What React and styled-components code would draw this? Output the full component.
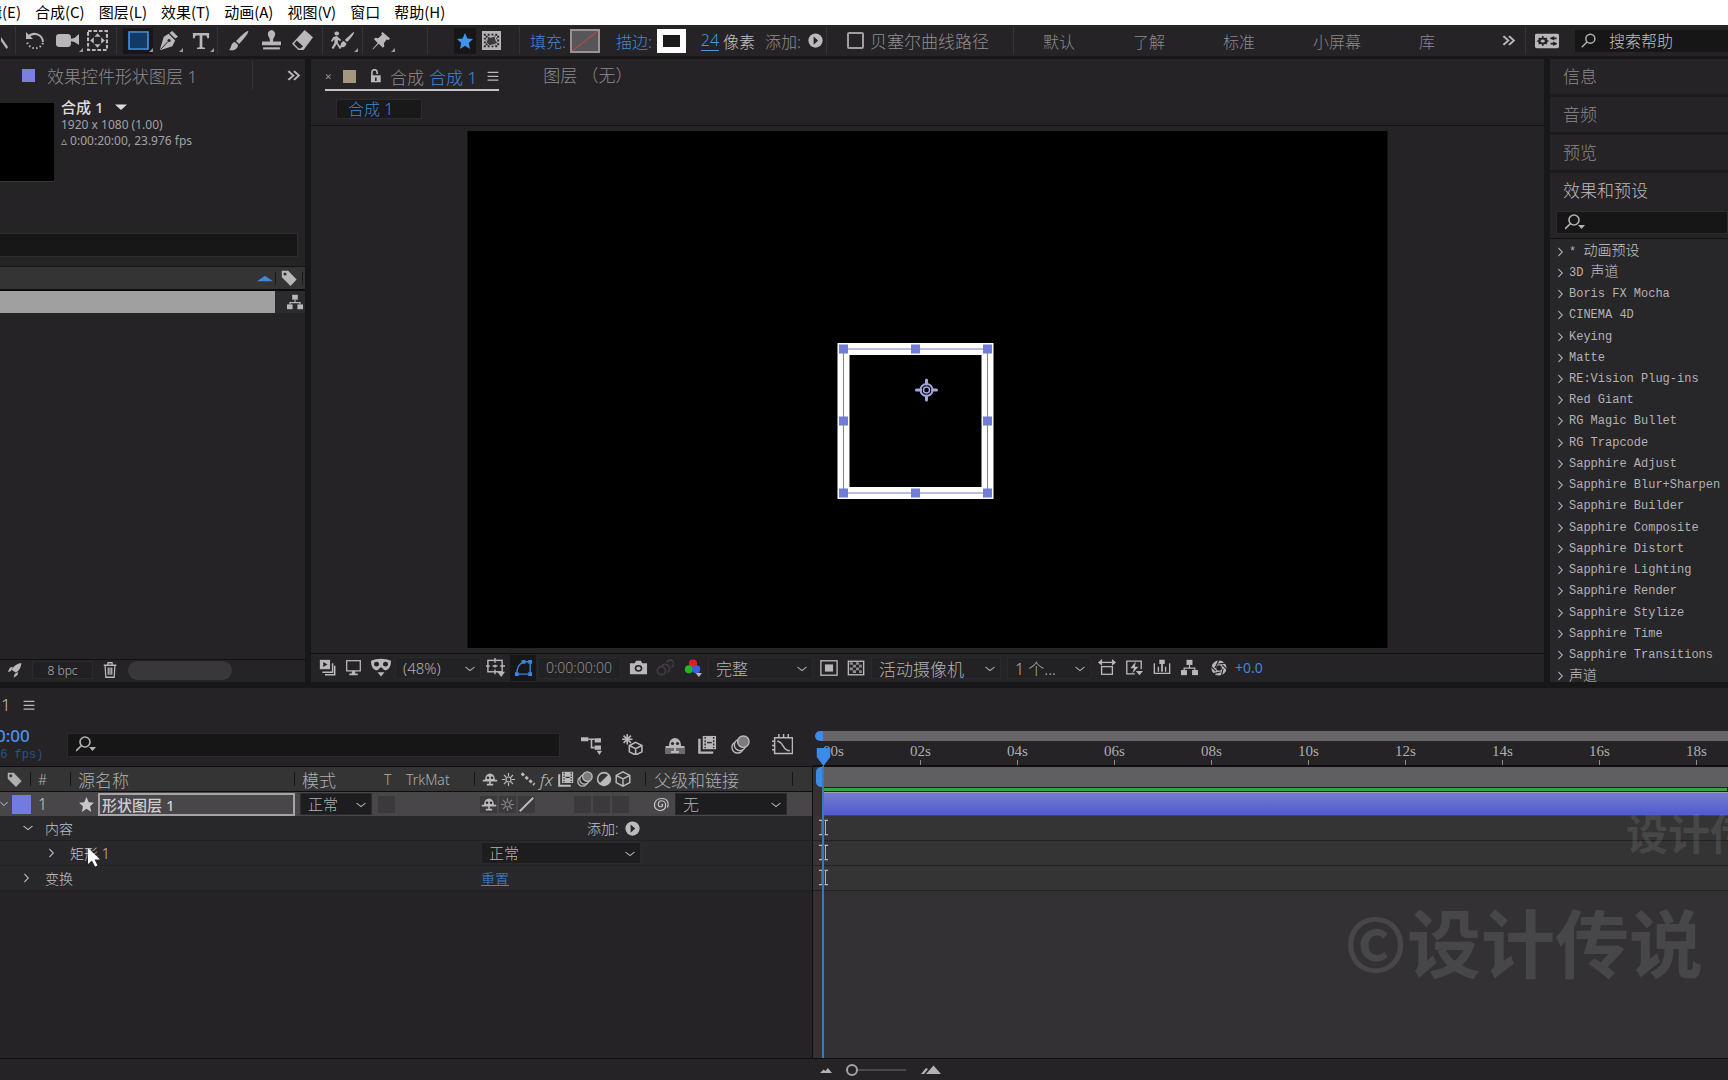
import styled, { createGlobalStyle } from "styled-components";

const GlobalStyle = createGlobalStyle`
* { box-sizing: border-box; }
body {
margin: 0;
background: #252326;
color: #b4b2b4;
font-family: "Noto Sans", "Noto Sans CJK SC", sans-serif;
font-size: 16px;
font-weight: 300;
overflow: hidden;
}
button, input, select {
font: inherit;
color: inherit;
border: 0;
padding: 0;
margin: 0;
background: none;
border-radius: 0;
}
svg { display: block; flex: none; }
`;

const Page = styled.div`
height: 100vh;
display: flex;
flex-direction: column;
white-space: nowrap;
overflow: hidden;
`;

const MenuBar = styled.nav`
height: 25px;
flex: none;
display: flex;
align-items: center;
gap: 14px;
padding-bottom: 2px;
background: #fff;
color: #000;
font-family: "Noto Sans CJK SC", sans-serif;
font-size: 15px;
font-weight: 400;
`;

const MenuItem = styled.button`
line-height: 22px;
&:first-child { margin-left: -13px; }
`;

const Toolbar = styled.div`
height: 34px;
flex: none;
display: flex;
align-items: center;
border-bottom: 3px solid #171618;
`;

const Tool = styled.button`
width: ${props => props.$w || 20}px;
height: 26px;
flex: none;
margin-left: ${props => props.$ml || 0}px;
padding-left: ${props => props.$menu ? 4 : 0}px;
display: flex;
align-items: center;
justify-content: center;
background: ${props => props.$active ? "#17171a" : "none"};
color: ${props => props.$color || "#b9b7b9"};
`;

const Sep = styled.span`
width: 1px;
height: ${props => props.$h || 27}px;
flex: none;
margin-left: ${props => props.$ml || 0}px;
background: ${props => props.$dark ? "#1b1b1b" : "#353337"};
`;

const ToolText = styled.span`
margin-left: ${props => props.$ml || 0}px;
color: ${props => props.$blue ? "#4287d6" : props.$bright ? "#c4c2c4" : "#908e90"};
`;

const Swatch = styled.button`
width: 30px;
height: 24px;
margin-left: 4px;
border: 2px solid #9a9292;
background: linear-gradient(142deg, #575557 47%, #8a4f52 47%, #8a4f52 53%, #575557 53%);
`;

const StrokeSwatch = styled.button`
width: 29px;
height: 24px;
margin-left: 5px;
background: #1b1b1b;
border: 6px solid #fff;
`;

const StrokeWidth = styled.button`
margin-left: 15px;
color: #4a93e6;
line-height: 20px;
border-bottom: 1px solid #4a93e6;
`;

const Check = styled.label`
display: flex;
align-items: center;
gap: 6px;
margin-left: 20px;
font-size: 17px;
color: #908e90;
input {
appearance: none;
width: 17px;
height: 17px;
border: 2px solid #a09ea0;
border-radius: 2px;
}
`;

const Workspaces = styled.div`
display: flex;
gap: 58px;
margin-left: 29px;
color: #8a888a;
`;

const HelpSearch = styled.label`
width: 153px;
height: 22px;
margin-left: 16px;
padding-left: 6px;
display: flex;
align-items: center;
gap: 13px;
background: #161616;
input { width: 100px; color: #c0bec0; outline: 0; }
input::placeholder { color: #c0bec0; opacity: 1; }
`;

const Workspace = styled.div`
flex: 1;
min-height: 0;
display: flex;
gap: 6px;
background: #171618;
border-bottom: 6px solid #171618;
`;

const Panel = styled.section`
min-width: 0;
min-height: 0;
display: flex;
flex-direction: column;
background: #252326;
overflow: hidden;
${props => props.$w ? `flex: 0 0 ${props.$w}px;` : "flex: 1;"}
`;

const TabRow = styled.div`
height: 36px;
flex: none;
display: flex;
align-items: center;
font-size: 17px;
color: #8e8c8e;
padding: 0 0 3px ${props => props.$pl || 0}px;
`;

const Square = styled.span`
width: 13px;
height: 13px;
flex: none;
margin-left: ${props => props.$ml || 0}px;
background: ${props => props.$color};
`;

const TabText = styled.button`
margin-left: ${props => props.$ml}px;
color: ${props => props.$blue ? "#4287d6" : props.$bright ? "#c0bec0" : "#8e8c8e"};
`;

const OtherTab = styled(TabText)`
line-height: 34px;
`;

const Push = styled.span`
margin-left: auto;
`;

const SourceInfo = styled.div`
display: flex;
gap: 7px;
margin-top: 8px;
height: 130px;
flex: none;
`;

const Thumb = styled.div`
width: 54px;
height: 79px;
background: #000;
border-bottom: 1px solid #3a383b;
`;

const SourceText = styled.div`
font-size: 12px;
line-height: 16px;
margin-top: -6px;
font-weight: 400;
color: #a4a2a4;
`;

const SourceName = styled.div`
display: flex;
align-items: center;
gap: 12px;
font-size: 15px;
line-height: 20px;
font-weight: 500;
color: #dedcde;
`;

const ProjectSearch = styled.input`
width: 298px;
height: 24px;
flex: none;
background: #171717;
border: 1px solid #2f2d30;
border-left: 0;
`;

const ProjectHead = styled.div`
height: 25px;
flex: none;
margin-top: 9px;
display: flex;
align-items: center;
justify-content: flex-end;
background: #343434;
border-top: 1px solid #121212;
border-bottom: 2px solid #0c0c0c;
padding-right: 2px;
`;

const ProjectRow = styled.div`
height: 22px;
flex: none;
display: flex;
align-items: center;
background: linear-gradient(to right, #a0a0a0 275px, #2b2a2c 275px);
justify-content: flex-end;
padding-right: 2px;
`;

const Fill = styled.div`
flex: 1;
min-height: 0;
`;

const ProjectFoot = styled.div`
height: 23px;
flex: none;
display: flex;
align-items: center;
border-top: 1px solid #111;
padding: 0 0 2px 4px;
`;

const Bpc = styled.button`
width: 61px;
height: 18px;
margin-left: 8px;
font-size: 12px;
line-height: 18px;
background: #212022;
border: 1px solid #2c2a2d;
`;

const ScrollThumb = styled.div`
width: 104px;
height: 19px;
margin-left: 10px;
border-radius: 10px;
background: #39373a;
`;

const CompTab = styled.div`
height: 32px;
display: flex;
align-items: center;
padding: 4px 0 0 0;
border-bottom: 2px solid #c4c2c4;
`;

const CompTabs = styled.div`
height: 33px;
flex: none;
display: flex;
align-items: flex-start;
padding-left: 14px;
font-size: 17px;
color: #8e8c8e;
`;

const Crumbs = styled.div`
height: 34px;
flex: none;
padding: 6px 0 0 25px;
border-bottom: 1px solid #131313;
`;

const Crumb = styled.button`
width: 86px;
height: 20px;
padding-left: 11px;
text-align: left;
line-height: 18px;
color: #4287d6;
background: #191919;
border: 1px solid #2c2a2d;
`;

const Stage = styled.div`
flex: 1;
min-height: 0;
padding: 5px 0;
svg { width: 100%; height: 100%; }
`;

const ViewBar = styled.div`
height: 29px;
flex: none;
display: flex;
align-items: center;
padding: 0 0 1px 6px;
border-top: 1px solid #0e0e0e;
`;

const TimeCode = styled.button`
width: 84px;
height: 22px;
margin-left: 1px;
font-size: 14px;
color: #918f91;
border: 1px solid #2b292c;
background: #222123;
`;

const Exposure = styled.button`
margin-left: 6px;
font-size: 14px;
font-weight: 400;
color: #4287d6;
`;

const SelectBox = styled.span`
position: relative;
display: block;
flex: none;
width: ${props => props.$w}px;
height: 22px;
margin-left: ${props => props.$ml || 0}px;
background: ${props => props.$dark ? "#1d1c1e" : "#222123"};
border: 1px solid #2b292c;
color: #b4b2b4;
font-size: ${props => props.$fs || 16}px;
select {
appearance: none;
width: 100%;
height: 20px;
line-height: 20px;
padding-left: 7px;
outline: 0;
}
svg {
position: absolute;
right: 5px;
top: 7px;
pointer-events: none;
}
`;

const SideTab = styled.button`
height: 38px;
flex: none;
padding: 0 0 ${props => props.$open ? 6 : 3}px 13px;
text-align: left;
font-size: 17px;
color: ${props => props.$open ? "#bcbabc" : "#8a888a"};
border-bottom: ${props => props.$open ? 0 : 3}px solid #1b1a1c;
`;

const EffectSearch = styled.label`
height: 23px;
flex: none;
margin: 0 0 4px 6px;
padding-left: 8px;
display: flex;
align-items: center;
background: #161616;
border: 1px solid #2c2a2d;
input { width: 100px; outline: 0; }
`;

const EffectList = styled.ul`
flex: 1;
min-height: 0;
margin: 0 0 -5px;
padding: 2px 0 0;
list-style: none;
display: flex;
flex-direction: column;
background: #272628;
border-top: 1px solid #111;
`;

const EffectItem = styled.li`
flex: 1;
min-height: 0;
padding-left: 7px;
display: flex;
align-items: center;
gap: 5px;
font-family: "Liberation Mono", "Noto Sans CJK SC", monospace;
font-size: 12px;
line-height: 20px;
font-weight: 400;
color: #b4b2b4;
`;

const EffectLabel = styled.span`
white-space: pre;
b { font-size: 14px; font-weight: 300; color: #c8c6c8; }
`;

const Timeline = styled.section`
height: 392px;
flex: none;
display: flex;
flex-direction: column;
`;

const TimelineBody = styled.div`
flex: 1;
min-height: 0;
display: flex;
`;

const Outline = styled.div`
width: 813px;
flex: none;
padding-right: 1px;
background: linear-gradient(#0e0e0e, #0e0e0e) right 78px / 1px 100% no-repeat;
`;

const TimeBar = styled.div`
height: 42px;
display: flex;
align-items: center;
padding-bottom: 1px;
`;

const Clock = styled.div`
width: 67px;
`;

const ClockTime = styled.div`
margin-left: -4px;
font-size: 17px;
line-height: 20px;
font-weight: 500;
color: #4a93e6;
`;

const ClockRate = styled.div`
margin-left: -7px;
font-family: "Liberation Mono", monospace;
font-size: 12px;
line-height: 18px;
color: #285388;
`;

const LayerSearch = styled.label`
width: 493px;
height: 24px;
padding-left: 8px;
display: flex;
align-items: center;
background: #161616;
border: 1px solid #2b292c;
input { flex: 1; outline: 0; }
`;

const Columns = styled.div`
display: grid;
grid-template-columns: 31px 40px 224px 77px 28px 75px 171px 147px 1fr;
align-items: center;
`;

const HeadRow = styled(Columns)`
height: 26px;
background: #343434;
border-top: 1px solid #0e0e0e;
border-bottom: 1px solid #0e0e0e;
font-size: 17px;
color: #b0aeb0;
`;

const HeadCell = styled.div`
height: 14px;
display: flex;
align-items: center;
padding-left: ${props => props.$pl || 7}px;
font-size: ${props => props.$small ? 14 : 17}px;
border-right: 1px solid ${props => props.$line ? "#161616" : "transparent"};
`;

const Switch = styled.button`
width: ${props => props.$box ? 17 : 19}px;
height: 17px;
margin-right: ${props => props.$box ? 2 : 0}px;
margin-left: ${props => props.$ml || 0}px;
display: flex;
align-items: center;
justify-content: center;
background: ${props => props.$box ? "#3b393b" : "none"};
color: ${props => props.$dim ? "#858385" : "#bcbabc"};
`;

const LayerRow = styled(Columns)`
height: 24px;
background: #484648;
font-size: 16px;
color: #c8c6c8;
`;

const Cell = styled.div`
display: flex;
align-items: center;
min-width: 0;
padding-left: ${props => props.$pl || 0}px;
`;

const LayerSwatch = styled.span`
width: 19px;
height: 19px;
margin-left: 4px;
background: #727be0;
`;

const LayerName = styled.input`
width: 197px;
height: 23px;
margin-left: 4px;
padding-left: 2px;
font-size: 15px;
font-weight: 500;
color: #d0ced0;
border: 2px solid #a6a4a6;
background: #484648;
outline: 0;
`;

const PropRow = styled.div`
height: 25px;
display: flex;
align-items: center;
border-bottom: 1px solid #212123;
background: #28282a;
font-size: 14px;
color: #c4c2c4;
`;

const PropName = styled.button`
width: ${props => 481 - props.$indent}px;
margin-left: ${props => props.$indent}px;
display: flex;
align-items: center;
gap: ${props => props.$gap}px;
text-align: left;
color: #c4c2c4;
`;

const AddButton = styled.button`
margin-left: 106px;
display: flex;
align-items: center;
gap: 7px;
`;

const ResetLink = styled.a`
color: #4287d6;
text-decoration: underline;
`;

const Tracks = styled.div`
flex: 1;
min-width: 0;
position: relative;
overflow: hidden;
background: #333134;
`;

const Navigator = styled.div`
height: 54px;
padding: 43px 0 0 2px;
background: #252326;
`;

const NavBar = styled.div`
height: 10px;
border-left: 8px solid #3c8be6;
border-radius: 6px 0 0 6px;
background: #686668;
`;

const Ruler = styled.div`
height: 25px;
display: flex;
padding-left: 77px;
background: #252326;
border-bottom: 2px solid #0e0e0e;
font-family: "Liberation Serif", serif;
font-size: 15px;
line-height: 18px;
font-weight: 400;
color: #b0aeb0;
`;

const FirstTick = styled.span`
width: 40px;
margin-left: -67px;
margin-right: 27px;
flex: none;
`;

const Tick = styled.span`
width: 97px;
margin-left: ${props => props.$first ? -18 : 0}px;
flex: none;
display: flex;
flex-direction: column;
align-items: center;
justify-content: space-between;
&::after {
content: "";
width: 1px;
height: 5px;
background: #8a888a;
}
`;

const WorkArea = styled.div`
height: 20px;
margin-left: 3px;
border-left: 7px solid #3c8be6;
border-radius: 5px 0 0 5px;
background: #5f5e60;
`;

const Cached = styled.div`
height: 5px;
margin-left: 10px;
background: #39a044;
border: 1px solid #0f2a10;
`;

const LayerBar = styled.div`
height: 24px;
margin-left: 10px;
border-top: 1px solid #a2a0b8;
border-bottom: 1px solid #3c3f78;
background: linear-gradient(#737bcc, #4f5bcf);
`;

const TrackRow = styled.div`
height: 25px;
padding: 0 0 2px 4px;
display: flex;
align-items: center;
background: #343434;
border-bottom: 1px solid #222;
color: #b4bac4;
`;

const Playhead = styled.div`
position: absolute;
left: 2px;
top: 60px;
bottom: 0;
width: 16px;
display: flex;
flex-direction: column;
align-items: center;
&::after {
content: "";
width: 2px;
flex: 1;
background: #3a78b8;
}
`;

const Watermark = styled.div`
position: absolute;
right: ${props => props.$right}px;
top: ${props => props.$top}px;
font-family: "Noto Sans CJK SC", sans-serif;
font-weight: 700;
font-size: ${props => props.$size}px;
line-height: 1;
color: rgba(255, 255, 255, 0.1);
`;

const Footer = styled.div`
height: 22px;
flex: none;
display: flex;
align-items: center;
padding-left: 820px;
border-top: 1px solid #0e0e0e;
`;

const ZoomRange = styled.input`
appearance: none;
width: 60px;
height: 14px;
margin: 0 15px 0 14px;
background: linear-gradient(#4a484b, #4a484b) center / 100% 2px no-repeat;
&::-webkit-slider-thumb {
appearance: none;
width: 12px;
height: 12px;
border: 2px solid #a4a2a4;
border-radius: 50%;
background: #252326;
}
`;

const CursorMark = styled.svg`
position: absolute;
left: 88px;
top: 848px;
`;

const corner = <path d="M4 18v4H0z" fill="#9a989a" />;
const line = { fill: "none", stroke: "currentColor", strokeWidth: 1.5 };

const shy = (
    <g fill="currentColor">
        <path d="M4 10a6 7 0 0 1 12 0v1h3v2h-8v3h3v2H6v-2h3v-3H1v-2h3z" />
        <circle cx="7.5" cy="8.5" r="1.6" fill="#2c2a2d" />
        <circle cx="12.5" cy="8.5" r="1.6" fill="#2c2a2d" />
    </g>
);

const glyphs = {
    select: <path d="M-4 4 9 17" stroke="currentColor" strokeWidth="3" />,
    rotate: (
        <g {...line} strokeWidth="2">
            <path d="M3 6a8.500 8.500 0 0 1 15 5" />
            <path d="M18 12a8.500 8.500 0 0 1-16-1" strokeDasharray="1.500 2.200" />
            <path d="M1 1v7h7z" fill="currentColor" stroke="none" />
        </g>
    ),
    video: (
        <g fill="currentColor">
            <rect x="0" y="3" width="13" height="13" rx="3" />
            <path d="M12 8l4-1 4-4v11l-4-3-4-1z" />
        </g>
    ),
    pan: (
        <g>
            <rect x="1" y="1" width="18" height="18" {...line} strokeWidth="2" strokeDasharray="3.500 1.700" />
            <path d="M10 3l3 3.500H7zM10 17l3-3.500H7zM3 10l3.500-3v6zM17 10l-3.500-3v6z" fill="currentColor" />
        </g>
    ),
    rect: <rect x="1" y="1" width="18" height="18" fill="#123a66" stroke="#4a93e6" strokeWidth="1.5" />,
    pen: (
        <g>
            <path d="M13 0l6 6-3 2-3-3-3-3z" fill="currentColor" />
            <path d="M9 3l7 7-3 6-12 4-1-1L4 6z" fill="currentColor" />
            <circle cx="9.500" cy="10" r="1.700" fill="#252326" />
            <path d="M1 19l7-7.500" stroke="#252326" />
        </g>
    ),
    type: <path d="M1 1h18v6h-2l-1-3h-4.500v13l3 .5V19h-9v-1.500l3-.5V4H4L3 7H1z" fill="currentColor" />,
    brush: (
        <g fill="currentColor">
            <path d="M19 0c2 1-6 10-9 13l-3-3C11 6 17 0 19 0z" />
            <path d="M6 11l3 3c0 4-4 6-9 5 3-2 1-7 6-8z" />
        </g>
    ),
    stamp: (
        <g fill="currentColor">
            <path d="M10 0a4 4 0 0 1 3 6c-1 2-1.500 2-1.500 5H19v3.500H1V11h7.500C8.500 8 8 8 7 6a4 4 0 0 1 3-6z" />
            <rect x="2" y="16.500" width="16" height="2" />
        </g>
    ),
    eraser: (
        <g>
            <path d="M12 0l8 7-9 12H6l-6-6z" fill="currentColor" />
            <path d="M4.500 10l6 5.500-2.500 2H6.500L2 13z" fill="#252326" />
        </g>
    ),
    roto: (
        <g fill="currentColor">
            <circle cx="5" cy="2.500" r="2" />
            <path d="M5 5l4 4-1 1-2-1v3l3 5-1.500 1L5 13l-3 5-1.500-1L3 12V8l-2 3-1-1 2-4z" />
            <path d="M20 1c1 1-4 8-6 10l-2-2c3-3 7-8 8-8zM11 10l2.500 2.500C13 16 10 17 7 16c2-1 1-5 4-6z" />
        </g>
    ),
    pin: <path d="M11 1l8 7-1.500 1.500-2-.5-3 4 .5 3-1.500 1.500-4.500-4L1 19.500l-.5-.5 5.500-6.500-4-4L3.500 7l3 .5 4-3.500-.8-1.700z" fill="currentColor" />,
    star: <path d="M10 0l3 7 7 .6-5.300 4.800L16.300 20 10 15.800 3.700 20l1.600-7.600L0 7.600 7 7z" fill="currentColor" />,
    checkerStar: (
        <g>
            <rect x="0" y="0" width="20" height="20" fill="#b4b2b4" />
            <path d="M2 4h16M2 8h16M2 12h16M2 16h16" stroke="#252326" strokeWidth="2" strokeDasharray="2 2" />
            <path d="M4 6h14M4 10h14M4 14h14" stroke="#252326" strokeWidth="2" strokeDasharray="2 2" />
            <circle cx="10" cy="10" r="5.500" fill="#b4b2b4" />
            <path d="M6 6l3 1 4-1 1 3 1 4-3 1-4 1-3-3 1-3z" fill="#3a383b" />
        </g>
    ),
    play: (
        <g>
            <circle cx="10" cy="10" r="9.500" fill="#bcbabc" />
            <path d="M7.500 4.500v11l6-5.500z" fill="#252326" />
        </g>
    ),
    more: <path d="M2 2l7 8-7 8M10 2l7 8-7 8" fill="none" stroke="currentColor" strokeWidth="3" />,
    panelGear: (
        <g>
            <rect x="0" y="2" width="20" height="16" rx="1.500" fill="currentColor" />
            <circle cx="6.500" cy="10" r="3" fill="none" stroke="#252326" strokeWidth="2" />
            <path d="M6.500 4.500v11M1.500 10h10M3 6.500l7 7M10 6.500l-7 7" stroke="#252326" strokeWidth="1.200" />
            <circle cx="6.500" cy="10" r="1.700" fill="currentColor" />
            <path d="M13 7h5M13 13h5" stroke="#252326" strokeWidth="2" />
            <path d="M16 4.500v5L12.500 7zM15 10.500v5l3.500-2.500z" fill="#252326" />
        </g>
    ),
    search: (
        <g fill="none" stroke="currentColor" strokeWidth="2">
            <circle cx="12.500" cy="7.500" r="6" />
            <path d="M8 12l-7 7" />
        </g>
    ),
    searchMenu: (
        <g>
            <circle cx="9" cy="7" r="5" {...line} strokeWidth="1.600" />
            <path d="M5.500 10.500L0 16" {...line} strokeWidth="1.600" />
            <path d="M13 12h7l-3.500 4z" fill="currentColor" />
        </g>
    ),
    lock: (
        <g>
            <rect x="3" y="9" width="15" height="10" fill="currentColor" />
            <path d="M4.500 10V5a4 4 0 0 1 8 0v2" {...line} strokeWidth="2.500" />
            <path d="M10.500 12v5" stroke="#252326" strokeWidth="2.500" />
        </g>
    ),
    burger: <path d="M1 4h18M1 10.500h18M1 17h18" {...line} strokeWidth="2.200" />,
    close: <path d="M3 4l13 13M16 4L3 17" {...line} strokeWidth="3" />,
    down: <path d="M0 5h20L10 16z" fill="currentColor" />,
    up: <path d="M0 15h20L10 5z" fill="currentColor" />,
    chevDown: <path d="M1 5l9 9 9-9" {...line} strokeWidth="2.500" />,
    chevRight: <path d="M4 2l11 8-11 8" {...line} strokeWidth="2.600" />,
    tag: (
        <g>
            <path d="M1 1h8l10.500 11-7.500 8L1 9z" fill="currentColor" />
            <circle cx="5" cy="5" r="2" fill="#343434" />
        </g>
    ),
    tree: (
        <g fill="currentColor">
            <rect x="6.500" y="1" width="7" height="6" />
            <rect x="0" y="13" width="7" height="6" />
            <rect x="13" y="13" width="7" height="6" />
            <path d="M9.300 7v3H3v3h1.500v-1.500h11V13H17v-3h-6.300V7z" />
        </g>
    ),
    rocket: (
        <g fill="currentColor">
            <path d="M19 0c0 6-3 10-7 13l-6-4C9 4 13 1 19 0z" />
            <path d="M8 5L4 6 1 12l4-1zM15 12l-1 4-5 3.500 1-5z" />
        </g>
    ),
    trash: (
        <g {...line} strokeWidth="1.800">
            <path d="M1 4h18M7 4V1h6v3M3 4l1 15h12l1-15M7.500 7v9M10 7v9M12.500 7v9" />
        </g>
    ),
    layers: (
        <g>
            <path d="M18.500 8v10.500H7M16 5v10.500H4" {...line} strokeWidth="1.800" />
            <rect x="1" y="1" width="12" height="11" fill="currentColor" />
            <path d="M5 3.500v6l5-3z" fill="#252326" />
        </g>
    ),
    monitor: (
        <g>
            <rect x="2" y="2" width="16" height="12" {...line} />
            <path d="M8 14h4v3h3v2H5v-2h3z" fill="currentColor" />
        </g>
    ),
    mask: (
        <g>
            <path d="M0 3c6-3 14-3 20 0 0 6-2 9-5 10-3 0-3-3-5-3s-2 3-5 3C2 12 0 9 0 3z" fill="currentColor" />
            <circle cx="5.500" cy="6.500" r="2.500" fill="#252326" />
            <circle cx="14.500" cy="6.500" r="2.500" fill="#252326" />
            <path d="M6.500 15h7L10 19.500z" fill="currentColor" />
        </g>
    ),
    guides: (
        <g>
            <rect x="2" y="2.500" width="15" height="12" {...line} />
            <path d="M9.500 0v5M9.500 7v3M9.500 12v5M0 8.500h4M7 8.500h5M15 8.500h5" {...line} />
            <path d="M12 14.500h8L16 20z" fill="currentColor" />
        </g>
    ),
    maskPath: (
        <g>
            <path d="M3 17c0-6 2-11 7-13h7v13z" {...line} />
            <path d="M1 15h4v4H1zM8 2h4v4H8zM15 2h4v4h-4zM15 15h4v4h-4z" fill="currentColor" />
        </g>
    ),
    camera: (
        <g>
            <path d="M1 5h5l1.500-3h5L14 5h5v13H1z" fill="currentColor" />
            <circle cx="10" cy="11" r="4" fill="#252326" />
            <circle cx="10" cy="11" r="2.200" fill="currentColor" />
        </g>
    ),
    ghost: (
        <g fill="none" stroke="#3e3c40" strokeWidth="2">
            <circle cx="6" cy="13" r="4.500" />
            <path d="M6 8a5 5 0 1 1 7 7" />
            <path d="M12 4a4 4 0 1 1 5 5" />
        </g>
    ),
    rgb: (
        <g>
            <circle cx="10" cy="5" r="4.500" fill="#e02020" />
            <circle cx="5.500" cy="11.500" r="4.500" fill="#25b52c" />
            <circle cx="13.500" cy="11.500" r="4.500" fill="#3c5ee0" />
            <path d="M13 15.500h7L16.500 20z" fill="currentColor" />
        </g>
    ),
    region: (
        <g>
            <rect x="1" y="2" width="18" height="16" {...line} />
            <rect x="5.500" y="6" width="9" height="8" fill="currentColor" />
        </g>
    ),
    grid: (
        <g>
            <rect x="1.500" y="2.500" width="17" height="15" {...line} />
            <path d="M3 5h14M3 11h14" stroke="#8d8b8d" strokeWidth="3" strokeDasharray="3.500 3.500" />
            <path d="M6.500 8h10M6.500 14h10" stroke="#8d8b8d" strokeWidth="3" strokeDasharray="3.500 3.500" />
        </g>
    ),
    pixel: (
        <g>
            <rect x="4" y="9" width="12" height="9" {...line} />
            <path d="M1 4h18" {...line} />
            <path d="M4.500 0v8L0 4zM15.500 0v8L20 4z" fill="currentColor" />
        </g>
    ),
    fast: (
        <g>
            <path d="M11 17.500H2v-15h16V12" {...line} />
            <path d="M12 3l-6 8h4l-2 6 7-8h-4zM12 14h8l-4 5z" fill="currentColor" />
        </g>
    ),
    graphBar: (
        <g>
            <path d="M1.500 5v12h17V5M6 9v6M14 9v6" {...line} />
            <path d="M7 1h6v5h-2v9H9V6H7z" fill="currentColor" />
        </g>
    ),
    aperture: (
        <g>
            <circle cx="10" cy="10" r="6.500" fill="none" stroke="currentColor" strokeWidth="6" />
            <path d="M10 0L5 10M18 4L9 5M20 12l-6-6M13 20l2-9M3 17l9-2M0 8l6 6" stroke="#252326" strokeWidth="1.500" />
        </g>
    ),
    flow: (
        <g>
            <path d="M0 3h7v4H0zM13 4h6v4h-6zM13 11h6v4h-6zM15 16h5l-2.500 4z" fill="currentColor" />
            <path d="M7 5h6M10 5v8h3" {...line} />
        </g>
    ),
    cubeStar: (
        <g {...line}>
            <path d="M13 8l6 3v6l-6 3-6-3v-6zM7 11l6 3 6-3M13 14v6" />
            <path d="M5 0v10M0 5h10M1.500 1.500l7 7M8.500 1.500l-7 7" />
        </g>
    ),
    shy,
    shyBig: (
        <g>
            <rect x="0" y="11" width="20" height="8" fill="#6c6a6c" />
            {shy}
        </g>
    ),
    film: (
        <g>
            <rect x="5" y="1" width="14" height="14" fill="currentColor" />
            <path d="M1.500 4v14.500H16" {...line} strokeWidth="2.500" />
            <path d="M7.500 2v12M16.500 2v12" stroke="#2c2a2d" strokeWidth="1.500" strokeDasharray="2 1.500" />
            <path d="M9.500 8h5" stroke="#2c2a2d" strokeWidth="1.500" />
        </g>
    ),
    blur: (
        <g {...line}>
            <circle cx="7" cy="13" r="6" />
            <circle cx="9.500" cy="10.500" r="6" fill="#2c2a2d" />
            <circle cx="13" cy="7" r="6" fill="#7c7a7c" />
        </g>
    ),
    graph: (
        <g {...line} strokeWidth="1.400">
            <path d="M2.500 3.500h17v15h-17zM5 7c6 0 5 9 12 9M6.500 0v3M11 0v3M15.500 0v3M0 7h2M0 11h2M0 15h2" />
        </g>
    ),
    sun: (
        <g {...line} strokeWidth="1.800">
            <circle cx="10" cy="10" r="3.800" />
            <path d="M10 0v5M10 15v5M0 10h5M15 10h5M3 3l3.500 3.500M13.500 13.500L17 17M17 3l-3.500 3.500M6.500 13.500L3 17" />
        </g>
    ),
    dashes: <path d="M2 3l16 14" stroke="currentColor" strokeWidth="3.500" strokeDasharray="4 2.500" />,
    slash: <path d="M1 19L19 1" stroke="currentColor" strokeWidth="2.500" />,
    half: (
        <g>
            <circle cx="10" cy="10" r="8" {...line} strokeWidth="2" />
            <path d="M16 4A8.500 8.500 0 0 1 4 16z" fill="currentColor" />
        </g>
    ),
    cube: <path d="M10 1l8.500 4.500v9L10 19l-8.500-4.500v-9zM1.500 5.500L10 10l8.500-4.500M10 10v9" {...line} strokeWidth="1.800" />,
    spiral: <path d="M10 10c2-1 2 3-1 3-5 0-4-8 1-8 7 0 8 12-1 13-11 1-12-16 2-16 7 0 9 6 7 12" {...line} strokeWidth="1.600" />,
    ibeam: <path d="M3 1.500h5.500M11.500 1.500H17M3 18.500h5.500M11.500 18.500H17M8 2v16M13 2v16" {...line} />,
    playhead: <path d="M1 0h18v10l-9 10L1 10z" fill="#3c8be6" />,
    hillSmall: <path d="M0 16l6-7 3 3 4-6 7 10z" fill="currentColor" />,
    hillBig: <path d="M5 18L12.500 1 20 18zM0 18L5 6l2 2-4 10z" fill="currentColor" />,
};

function Icon({ name, w = 18, h = w }) {
    return (
        <svg width={w} height={h} viewBox="0 0 20 20" preserveAspectRatio="none" aria-hidden="true">
            {glyphs[name]}
        </svg>
    );
}

function ToolIcon({ name, w, ml, size = 19, height = size, menu, active, color }) {
    return (
        <Tool $w={w} $ml={ml} $menu={menu} $active={active} $color={color} aria-label={name}>
            <Icon name={name} w={size} h={height} />
            {menu && <svg width="4" height="22" viewBox="0 0 4 22">{corner}</svg>}
        </Tool>
    );
}

function Select({ label, value, ...rest }) {
    return (
        <SelectBox {...rest}>
            <select aria-label={label} defaultValue={value}>
                <option>{value}</option>
            </select>
            <Icon name="chevDown" w={10} h={8} />
        </SelectBox>
    );
}

const menus = ["辑(E)", "合成(C)", "图层(L)", "效果(T)", "动画(A)", "视图(V)", "窗口", "帮助(H)"];
const workspaces = ["默认", "了解", "标准", "小屏幕", "库"];
const effects = [
    "Boris FX Mocha", "CINEMA 4D", "Keying", "Matte", "RE:Vision Plug-ins", "Red Giant",
    "RG Magic Bullet", "RG Trapcode", "Sapphire Adjust", "Sapphire Blur+Sharpen",
    "Sapphire Builder", "Sapphire Composite", "Sapphire Distort", "Sapphire Lighting",
    "Sapphire Render", "Sapphire Stylize", "Sapphire Time", "Sapphire Transitions",
];
const seconds = ["02s", "04s", "06s", "08s", "10s", "12s", "14s", "16s", "18s"];
const switches = ["shy", "sun", "dashes", "fx", "film", "blur", "half", "cube"];

function Tools() {
    return (
        <Toolbar>
            <ToolIcon name="select" w={15} size={14} height={20} />
            <Sep />
            <ToolIcon name="rotate" w={37} size={20} />
            <ToolIcon name="video" w={28} size={23} height={20} menu />
            <ToolIcon name="pan" w={33} size={21} />
            <Sep $ml={2} />
            <ToolIcon name="rect" w={30} ml={6} size={21} height={19} menu active />
            <ToolIcon name="pen" w={32} size={19} menu />
            <ToolIcon name="type" w={32} size={18} menu />
            <Sep />
            <ToolIcon name="brush" w={42} size={20} />
            <ToolIcon name="stamp" w={22} size={21} />
            <ToolIcon name="eraser" w={40} size={21} />
            <Sep />
            <ToolIcon name="roto" w={39} size={23} height={20} menu />
            <Sep />
            <ToolIcon name="pin" w={37} size={19} menu />
            <Sep $ml={27} />
            <ToolIcon name="star" w={22} ml={26} size={16} active color="#3f94f0" />
            <ToolIcon name="checkerStar" w={30} size={19} />
            <Sep $ml={13} />
            <ToolText $blue $ml={10}>填充:</ToolText>
            <Swatch aria-label="填充" />
            <ToolText $blue $ml={16}>描边:</ToolText>
            <StrokeSwatch aria-label="描边" />
            <StrokeWidth>24</StrokeWidth>
            <ToolText $bright $ml={4}>像素</ToolText>
            <ToolText $ml={10}>添加:</ToolText>
            <ToolIcon name="play" w={22} ml={3} size={15} />
            <Sep />
            <Check><input type="checkbox" />贝塞尔曲线路径</Check>
            <Sep $ml={24} />
            <Workspaces>
                {workspaces.map(name => <button key={name}>{name}</button>)}
            </Workspaces>
            <Push />
            <Tool $w={16} aria-label="更多"><Icon name="more" w={14} h={11} /></Tool>
            <Sep $ml={8} />
            <ToolIcon name="panelGear" w={24} ml={9} size={24} height={18} />
            <HelpSearch>
                <Icon name="search" w={15} />
                <input aria-label="搜索帮助" placeholder="搜索帮助" />
            </HelpSearch>
        </Toolbar>
    );
}

function Project() {
    return (
        <Panel $w={305}>
            <TabRow $pl={22}>
                <Square $color="#7a80e0" />
                <TabText $ml={12}>效果控件形状图层 1</TabText>
                <Push />
                <Sep $h={29} />
                <Tool $w={22} $ml={30} aria-label="更多"><Icon name="more" w={14} h={11} /></Tool>
            </TabRow>
            <SourceInfo>
                <Thumb />
                <SourceText>
                    <SourceName>合成 1 <Icon name="down" w={12} h={10} /></SourceName>
                    <div>1920 x 1080 (1.00)</div>
                    <div>▵ 0:00:20:00, 23.976 fps</div>
                </SourceText>
            </SourceInfo>
            <ProjectSearch aria-label="搜索素材" />
            <ProjectHead>
                <Tool $color="#4287d6" aria-label="排序"><Icon name="up" w={16} h={11} /></Tool>
                <Sep $h={13} $dark />
                <ToolIcon name="tag" w={26} size={16} />
                <Sep $h={13} $dark />
            </ProjectHead>
            <ProjectRow><ToolIcon name="tree" w={16} size={16} /></ProjectRow>
            <Fill />
            <ProjectFoot>
                <ToolIcon name="rocket" size={15} />
                <Bpc>8 bpc</Bpc>
                <ToolIcon name="trash" w={16} ml={9} size={14} height={16} />
                <ScrollThumb />
            </ProjectFoot>
        </Panel>
    );
}

function Composition() {
    const handles = [[376, 218], [448, 218], [520, 218], [376, 290], [520, 290], [376, 362], [448, 362], [520, 362]];
    return (
        <Panel>
            <CompTabs>
                <CompTab>
                    <Icon name="close" w={7} />
                    <Square $color="#a3987f" $ml={11} />
                    <Tool $w={12} $ml={13} aria-label="锁定"><Icon name="lock" w={13} h={14} /></Tool>
                    <TabText $ml={9}>合成</TabText>
                    <TabText $ml={5} $blue>合成 1</TabText>
                    <Tool $w={12} $ml={10} aria-label="菜单"><Icon name="burger" w={12} h={12} /></Tool>
                </CompTab>
                <OtherTab $ml={44}>图层 （无）</OtherTab>
            </CompTabs>
            <Crumbs><Crumb>合成 1</Crumb></Crumbs>
            <Stage>
                <svg viewBox="0 0 920 517">
                    <rect width="920" height="517" fill="#000" />
                    <rect x="376" y="218" width="144" height="144" fill="none" stroke="#fff" strokeWidth="12" />
                    <rect x="376" y="218" width="144" height="144" fill="none" stroke="#777cb8" strokeWidth="1" />
                    {handles.map(([x, y]) => (
                        <rect key={`${x}-${y}`} x={x - 4.5} y={y - 4.5} width="9" height="9" fill="#717bd8" />
                    ))}
                    <g fill="none" stroke="#a3a5dc" strokeLinecap="round">
                        <circle cx="459" cy="259" r="6" strokeWidth="2" />
                        <path d="M459 249v4M459 265v4M449 259h4M465 259h4" strokeWidth="3" />
                        <circle cx="459" cy="259" r="3" strokeWidth="1.500" />
                    </g>
                </svg>
            </Stage>
            <ViewBar>
                <ToolIcon name="layers" size={17} />
                <ToolIcon name="monitor" ml={6} size={17} />
                <ToolIcon name="mask" ml={8} size={20} height={19} />
                <Select label="放大率" value="(48%)" $w={86} $ml={4} $fs={15} />
                <ToolIcon name="guides" ml={4} size={19} />
                <ToolIcon name="maskPath" w={26} ml={5} size={19} active color="#3c84d8" />
                <TimeCode>0:00:00:00</TimeCode>
                <ToolIcon name="camera" ml={7} size={19} height={17} />
                <ToolIcon name="ghost" ml={7} size={18} />
                <ToolIcon name="rgb" ml={8} size={18} />
                <Select label="分辨率" value="完整" $w={105} $ml={5} />
                <ToolIcon name="region" ml={6} size={18} />
                <ToolIcon name="grid" ml={7} size={18} />
                <Select label="视图" value="活动摄像机" $w={130} $ml={5} $fs={17} />
                <Select label="视图数" value="1 个..." $w={84} $ml={6} />
                <ToolIcon name="pixel" ml={6} size={18} height={17} />
                <ToolIcon name="fast" ml={7} size={18} height={17} />
                <ToolIcon name="graphBar" ml={8} size={18} height={17} />
                <ToolIcon name="tree" ml={7} size={17} />
                <ToolIcon name="aperture" ml={10} size={16} />
                <Exposure>+0.0</Exposure>
            </ViewBar>
        </Panel>
    );
}

function Effects() {
    return (
        <Panel $w={178}>
            <SideTab>信息</SideTab>
            <SideTab>音频</SideTab>
            <SideTab>预览</SideTab>
            <SideTab $open>效果和预设</SideTab>
            <EffectSearch>
                <Icon name="searchMenu" w={20} />
                <input aria-label="搜索效果" />
            </EffectSearch>
            <EffectList>
                <EffectItem><Icon name="chevRight" w={7} h={10} /><EffectLabel>* <b>动画预设</b></EffectLabel></EffectItem>
                <EffectItem><Icon name="chevRight" w={7} h={10} /><EffectLabel>3D <b>声道</b></EffectLabel></EffectItem>
                {effects.map(name => (
                    <EffectItem key={name}><Icon name="chevRight" w={7} h={10} /><EffectLabel>{name}</EffectLabel></EffectItem>
                ))}
                <EffectItem><Icon name="chevRight" w={7} h={10} /><EffectLabel><b>声道</b></EffectLabel></EffectItem>
            </EffectList>
        </Panel>
    );
}

function LayerOutline() {
    return (
        <Outline>
            <TabRow $pl={1}>
                <TabText $ml={0} $bright>1</TabText>
                <Tool $w={12} $ml={12} aria-label="菜单"><Icon name="burger" w={12} h={12} /></Tool>
            </TabRow>
            <TimeBar>
                <Clock>
                    <ClockTime>0:00</ClockTime>
                    <ClockRate>76 fps)</ClockRate>
                </Clock>
                <LayerSearch>
                    <Icon name="searchMenu" w={20} />
                    <input aria-label="搜索图层" />
                </LayerSearch>
                <ToolIcon name="flow" w={24} ml={19} size={21} />
                <ToolIcon name="cubeStar" w={22} ml={18} size={21} />
                <ToolIcon name="shyBig" w={22} ml={21} size={20} />
                <ToolIcon name="film" w={20} ml={11} size={19} />
                <ToolIcon name="blur" w={20} ml={13} size={19} />
                <ToolIcon name="graph" w={22} ml={21} size={21} />
            </TimeBar>
            <HeadRow>
                <HeadCell $line><Icon name="tag" w={15} /></HeadCell>
                <HeadCell $line $small>#</HeadCell>
                <HeadCell $line>源名称</HeadCell>
                <HeadCell>模式</HeadCell>
                <HeadCell $pl={12} $small>T</HeadCell>
                <HeadCell $pl={6} $small $line>TrkMat</HeadCell>
                <HeadCell $pl={5} $line>
                    {switches.map(name => (
                        <Switch key={name} aria-label={name}>
                            {name === "fx" ? <em>fx</em> : <Icon name={name} w={name === "sun" ? 13 : 16} />}
                        </Switch>
                    ))}
                </HeadCell>
                <HeadCell $pl={8} $line>父级和链接</HeadCell>
            </HeadRow>
            <LayerRow>
                <Cell><Icon name="chevDown" w={8} h={8} /><LayerSwatch /></Cell>
                <Cell $pl={7}>1</Cell>
                <Cell $pl={8}><Icon name="star" w={15} /><LayerName aria-label="图层名称" defaultValue="形状图层 1" /></Cell>
                <Cell $pl={5}><Select label="模式" value="正常" $w={72} $fs={15} $dark /></Cell>
                <Cell $pl={6}><Switch $box aria-label="T" /></Cell>
                <Cell />
                <Cell $pl={5}>
                    <Switch $box aria-label="消隐"><Icon name="shy" w={16} /></Switch>
                    <Switch $box $dim aria-label="折叠"><Icon name="sun" w={13} /></Switch>
                    <Switch $box aria-label="品质"><Icon name="slash" w={15} /></Switch>
                    <Switch $box $ml={37} aria-label="运动模糊" />
                    <Switch $box aria-label="调整图层" />
                    <Switch $box aria-label="3D 图层" />
                </Cell>
                <Cell $pl={8}><Icon name="spiral" w={15} /><Select label="父级" value="无" $w={112} $ml={6} $dark /></Cell>
            </LayerRow>
            <PropRow>
                <PropName $indent={23} $gap={12}><Icon name="chevDown" w={10} h={8} />内容</PropName>
                <AddButton>添加:<Icon name="play" w={15} /></AddButton>
            </PropRow>
            <PropRow>
                <PropName $indent={48} $gap={15}><Icon name="chevRight" w={7} h={10} />矩形 1</PropName>
                <Select label="混合模式" value="正常" $w={160} $fs={15} $dark />
            </PropRow>
            <PropRow>
                <PropName $indent={23} $gap={15}><Icon name="chevRight" w={7} h={10} />变换</PropName>
                <ResetLink href="#reset">重置</ResetLink>
            </PropRow>
        </Outline>
    );
}

function TrackArea() {
    return (
        <Tracks>
            <Navigator><NavBar /></Navigator>
            <Ruler>
                <FirstTick>00s</FirstTick>
                {seconds.map((name, i) => <Tick key={name} $first={i === 0}>{name}</Tick>)}
            </Ruler>
            <WorkArea />
            <Cached />
            <LayerBar />
            <TrackRow><Icon name="ibeam" w={13} h={17} /></TrackRow>
            <TrackRow><Icon name="ibeam" w={13} h={17} /></TrackRow>
            <TrackRow><Icon name="ibeam" w={13} h={17} /></TrackRow>
            <Watermark $right={-66} $top={123} $size={42}>设计传说</Watermark>
            <Watermark $right={25} $top={215} $size={74}>©设计传说</Watermark>
            <Playhead><Icon name="playhead" w={15} h={18} /></Playhead>
        </Tracks>
    );
}

function App() {
    return (
        <Page>
            <GlobalStyle />
            <MenuBar>
                {menus.map(name => <MenuItem key={name}>{name}</MenuItem>)}
            </MenuBar>
            <Tools />
            <Workspace>
                <Project />
                <Composition />
                <Effects />
            </Workspace>
            <Timeline>
                <TimelineBody>
                    <LayerOutline />
                    <TrackArea />
                </TimelineBody>
                <Footer>
                    <Icon name="hillSmall" w={12} h={10} />
                    <ZoomRange type="range" aria-label="缩放" defaultValue="0" />
                    <Icon name="hillBig" w={20} h={10} />
                </Footer>
            </Timeline>
            <CursorMark width="12" height="19" viewBox="0 0 12 19">
                <path d="M0 0v16l4-3.500 3 6 2.500-1-3-6H12z" fill="#fff" />
            </CursorMark>
        </Page>
    );
}

export default App;
